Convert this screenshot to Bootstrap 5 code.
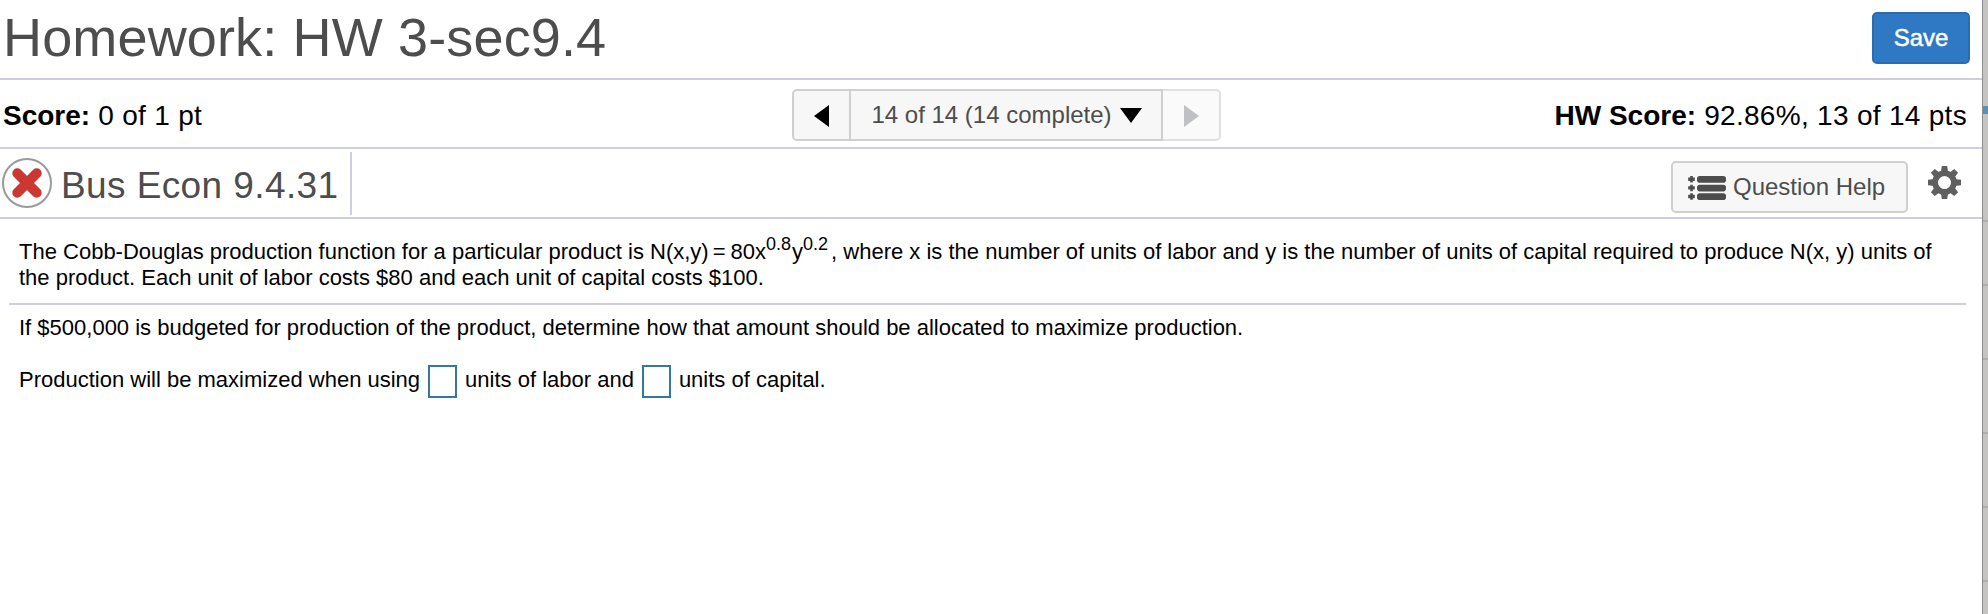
<!DOCTYPE html>
<html lang="en">
<head>
<meta charset="utf-8">
<meta name="viewport" content="width=device-width, initial-scale=1">
<title>Homework: HW 3-sec9.4</title>
<link href="https://cdn.jsdelivr.net/npm/bootstrap@5.3.0/dist/css/bootstrap.min.css" rel="stylesheet">
<style>
body{font-family:"Liberation Sans",Arial,sans-serif;color:#000;background:#fff;overflow:hidden}
.shell{height:614px}
.side-strip{width:6px;border-left:1px solid #8c8c8c;
  background:
    linear-gradient(#5f8fab,#5f8fab) 0 106px/100% 8px no-repeat,
    linear-gradient(#b0afae,#b0afae) 0 220px/100% 2px no-repeat,
    linear-gradient(#c5c4c3,#c5c4c3) 0 0/100% 284px no-repeat,
    repeating-linear-gradient(#b0afae 0 2px,#c5c4c3 2px 74px) 0 284px/100% 370px no-repeat,
    #c5c4c3}
.bar{border-bottom:2px solid #cdd0dc}
.bar-title{height:80px}
.bar-score{height:69px}
.bar-question{height:70px}
.hw-title{font-size:54px;line-height:74px;letter-spacing:.15px;color:#4d4d4d;padding-left:3px;font-weight:400}
.btn-flat{height:52px;font-size:24px;line-height:24px;border-width:2px;border-radius:5px;padding:0;font-family:inherit}
.btn-save{width:98px;margin:12px 12px 0 0;background:#2f78c4;border-color:#2a6bb1;color:#fff;-webkit-text-stroke:.5px #fff}
.score{font-size:28px;line-height:32px;padding-top:20px;letter-spacing:.3px}
.score b{letter-spacing:0}
.score-left{width:792px;padding-left:3px}
.score-right{padding-right:15px}
.pager{padding-top:9px}
.btn-pager{background:#f7f7f7;border-color:#cfcfcf;color:#4d4d4d}
.btn-prev{width:60px}
.btn-list{width:314px;margin-left:-3px!important;padding-left:1px;position:relative;z-index:1}
.btn-next,.btn-next:disabled{width:60px;margin-left:-2px!important;background:#fafafa;border-color:#e0e0e0;opacity:1}
.arrow-side{margin:1px 0 0 20px}
.arrow-next{margin-left:21px}
.result-icon{margin:9px 0 0 2px}
.q-name{font-size:37px;line-height:44px;letter-spacing:.4px;color:#4d4d4d;font-weight:400;margin:15px 0 0 9px;white-space:nowrap;width:289px}
.q-sep{width:2px;height:63px;margin-top:3px;background:#cdd0dc}
.btn-help{width:237px;margin-top:12px;background:#f7f7f7;border-color:#cfcfcf;color:#4d4d4d}
.help-icon{margin:13px 0 0 15px}
.help-label{margin:12px 0 0 6px}
.gear{margin:17px 21px 0 20px}
.problem{font-size:22px;line-height:26px;padding:20px 0 0 19px}
.problem sup{font-size:18px;line-height:0;top:0;vertical-align:9px}
.statement{height:64px;white-space:nowrap}
.eq-sign{margin:0 5px 0 4px}
.math-y{margin-left:1px}
.after-math{margin-left:3px}
.rule{height:2px;background:#cdd0dc;margin:0 16px 0 -10px}
.ask{padding-top:10px;height:60px}
.answer-row{line-height:30px}
.answer-box{width:29px;height:33px;border:2px solid #33799b;margin:0 8px}
</style>
</head>
<body>
<div class="shell d-flex">
  <main class="flex-grow-1">
    <header class="bar bar-title d-flex justify-content-between align-items-start">
      <h1 class="hw-title m-0">Homework: HW 3-sec9.4</h1>
      <button class="btn btn-flat btn-save" type="button">Save</button>
    </header>

    <section class="bar bar-score d-flex align-items-start">
      <div class="score score-left"><b>Score:</b> 0 of 1 pt</div>
      <div class="pager">
        <div class="btn-group">
          <button class="btn btn-flat btn-pager btn-prev d-flex align-items-center" type="button" aria-label="Previous">
            <svg class="arrow-side" width="15" height="22" viewBox="0 0 15 22"><path d="M15 0v22L0 11z" fill="#000"/></svg>
          </button>
          <button class="btn btn-flat btn-pager btn-list d-flex align-items-center justify-content-center" type="button">
            <span>14 of 14 (14 complete)</span>
            <svg class="ms-2" width="22" height="15" viewBox="0 0 22 15"><path d="M0 0h22L11 15z" fill="#000"/></svg>
          </button>
          <button class="btn btn-flat btn-pager btn-next d-flex align-items-center" type="button" disabled aria-label="Next">
            <svg class="arrow-side arrow-next" width="15" height="22" viewBox="0 0 15 22"><path d="M0 0v22l15-11z" fill="#bfc0c4"/></svg>
          </button>
        </div>
      </div>
      <div class="score score-right ms-auto"><b>HW Score:</b> 92.86%, 13 of 14 pts</div>
    </section>

    <section class="bar bar-question d-flex align-items-start">
      <svg class="result-icon flex-shrink-0" width="50" height="50" viewBox="0 0 50 50">
        <circle cx="25" cy="25" r="24" fill="#fff" stroke="#999" stroke-width="2"/>
        <path d="M15.300 15.300l19.400 19.400M34.700 15.300L15.300 34.700" stroke="#cb3732" stroke-width="10" stroke-linecap="round"/>
      </svg>
      <h2 class="q-name mb-0">Bus Econ 9.4.31</h2>
      <div class="q-sep"></div>
      <div class="ms-auto d-flex align-items-start">
        <button class="btn btn-flat btn-help d-flex align-items-start" type="button">
          <svg class="help-icon" width="39" height="25" viewBox="0 0 39 25" fill="#4d4d4d">
            <path id="plus" d="M2.200 0h2.600v1.500h2v3.400h-2v1.600H2.200V4.900H.2V1.500h2z"/>
            <use href="#plus" y="8.700"/><use href="#plus" y="17.300"/>
            <rect x="9" y="0" width="29" height="6.700" rx="2.800"/>
            <rect x="9" y="8.700" width="29" height="6.700" rx="2.800"/>
            <rect x="9" y="17.300" width="29" height="6.700" rx="2.800"/>
          </svg>
          <span class="help-label">Question Help</span>
        </button>
        <svg class="gear" width="33" height="33" viewBox="-16.500 -16.500 33 33" fill="#5f5f5f">
          <g id="teeth"><path id="tooth" d="M-3.600-10l.9-6.500h5.400L3.600-10z"/><use href="#tooth" transform="rotate(90)"/><use href="#tooth" transform="rotate(180)"/><use href="#tooth" transform="rotate(270)"/></g>
          <use href="#teeth" transform="rotate(45)"/>
          <circle r="9.300" fill="none" stroke="#5f5f5f" stroke-width="6"/>
          <circle r="6.300" fill="#fff"/>
        </svg>
      </div>
    </section>

    <section class="problem">
      <div class="statement">The Cobb-Douglas production function for a particular product is N(x,y)<span class="eq-sign">=</span>80x<sup>0.8</sup><span class="math-y">y</span><sup>0.2</sup><span class="after-math">, where x is the number of units of labor and y is the number of units of capital required to produce N(x, y) units of</span><br>the product. Each unit of labor costs $80 and each unit of capital costs $100.</div>
      <div class="rule"></div>
      <div class="ask">If $500,000 is budgeted for production of the product, determine how that amount should be allocated to maximize production.</div>
      <div class="answer-row d-flex align-items-start">
        <span>Production will be maximized when using</span>
        <span class="answer-box"></span>
        <span>units of labor and</span>
        <span class="answer-box"></span>
        <span>units of capital.</span>
      </div>
    </section>
  </main>
  <aside class="side-strip flex-shrink-0"></aside>
</div>
<script src="https://cdn.jsdelivr.net/npm/bootstrap@5.3.0/dist/js/bootstrap.bundle.min.js"></script>
</body>
</html>
